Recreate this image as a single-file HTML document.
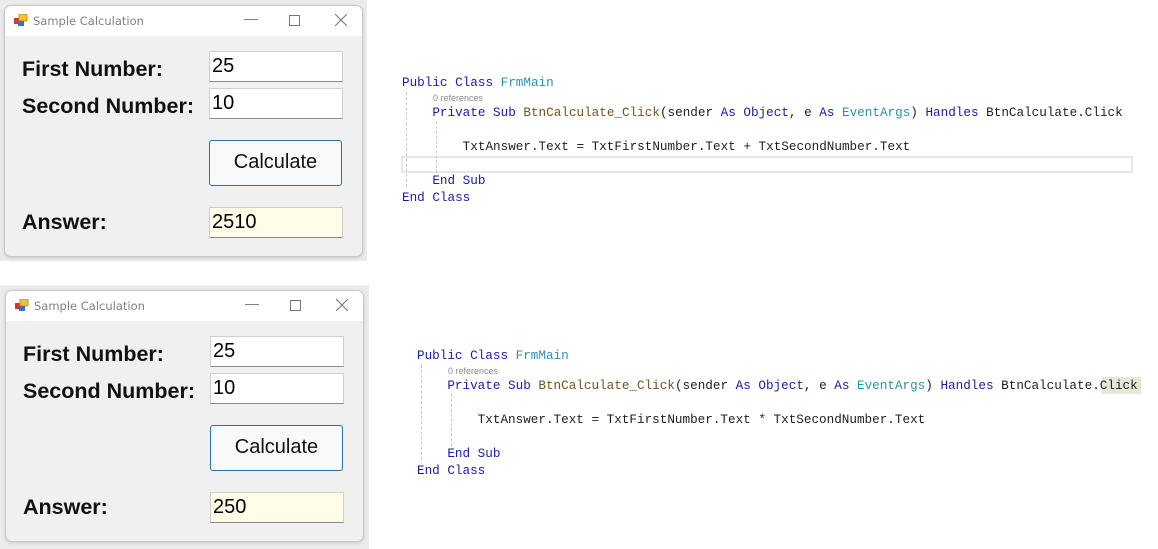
<!DOCTYPE html>
<html><head><meta charset="utf-8"><style>
*{margin:0;padding:0;box-sizing:border-box}
body{width:1158px;height:549px;background:#fff;position:relative;overflow:hidden;font-family:"Liberation Sans",Arial,sans-serif}
.shade{position:absolute;background:#ebebeb}
.win{position:absolute;width:359px;height:252px;background:#f0f0f0;border:1px solid #c8c8c8;border-radius:7px;overflow:hidden;box-shadow:0 1px 3px rgba(0,0,0,.15)}
.tb{position:absolute;left:0;top:0;width:100%;height:30px;background:#fff}
.title{position:absolute;left:28px;top:8px;color:#808080;font-family:"DejaVu Sans","Liberation Sans",sans-serif;font-size:11.5px}
.ico{position:absolute;left:9px;top:8px;width:14px;height:13px}
.ctl{position:absolute;top:6px;color:#777;font-size:14px}
.lbl{position:absolute;left:17px;font-weight:bold;font-size:21.5px;color:#111}
.box{position:absolute;left:204px;width:134px;height:31px;background:#fff;border:1px solid #cfcfcf;border-bottom:1px solid #8a8a8a;font-size:20px;padding:3px 0 0 2px;color:#000}
.btn{position:absolute;left:204px;top:134px;width:133px;height:46px;background:#f8f9fa;border:1px solid #2d6ea3;border-radius:3px;font-size:20px;text-align:center;line-height:43px;color:#111}
.code{position:absolute;font-family:"Liberation Mono",monospace;font-size:12.65px;color:#1e1e1e;white-space:pre;line-height:17px}
.k{color:#1a1ca8}.t{color:#2b91af}.m{color:#74531f}
.ref{position:absolute;font-family:"Liberation Sans",sans-serif;font-size:9px;color:#8a8a8a}
.guide{position:absolute;border-left:1px dashed #c8c8c8;width:0}
</style></head><body>

<div class="shade" style="left:0;top:0;width:367px;height:261px"></div>
<div class="shade" style="left:0;top:285px;width:369px;height:264px"></div>

<div class="win" style="left:4px;top:5px">
 <div class="tb"></div>
 <svg class="ico" viewBox="0 0 14 13"><rect x="0" y="4" width="6" height="6" fill="#d03a2a"/><rect x="5" y="0" width="8" height="7" fill="#f2c230" stroke="#b08a10" stroke-width=".8"/><rect x="4" y="7" width="6" height="5" fill="#3a6fc8"/></svg>
 <div class="title">Sample Calculation</div>
 <div class="ctl" style="left:239px;top:4px">—</div>
 <div style="position:absolute;left:284px;top:9px;width:11px;height:11px;border:1px solid #777"></div>
 <svg style="position:absolute;left:330px;top:8px" width="12" height="12"><path d="M0 0L12 12M12 0L0 12" stroke="#777" stroke-width="1.1"/></svg>
 <div class="lbl" style="top:51px">First Number:</div>
 <div class="lbl" style="top:88px">Second Number:</div>
 <div class="box" style="top:45px">25</div>
 <div class="box" style="top:82px">10</div>
 <div class="btn">Calculate</div>
 <div class="lbl" style="top:204px">Answer:</div>
 <div class="box" style="top:201px;background:#fffde8">2510</div>
</div>

<div class="win" style="left:5px;top:290px">
 <div class="tb"></div>
 <svg class="ico" viewBox="0 0 14 13"><rect x="0" y="4" width="6" height="6" fill="#d03a2a"/><rect x="5" y="0" width="8" height="7" fill="#f2c230" stroke="#b08a10" stroke-width=".8"/><rect x="4" y="7" width="6" height="5" fill="#3a6fc8"/></svg>
 <div class="title">Sample Calculation</div>
 <div class="ctl" style="left:239px;top:4px">—</div>
 <div style="position:absolute;left:284px;top:9px;width:11px;height:11px;border:1px solid #777"></div>
 <svg style="position:absolute;left:330px;top:8px" width="12" height="12"><path d="M0 0L12 12M12 0L0 12" stroke="#777" stroke-width="1.1"/></svg>
 <div class="lbl" style="top:51px">First Number:</div>
 <div class="lbl" style="top:88px">Second Number:</div>
 <div class="box" style="top:45px">25</div>
 <div class="box" style="top:82px">10</div>
 <div class="btn">Calculate</div>
 <div class="lbl" style="top:204px">Answer:</div>
 <div class="box" style="top:201px;background:#fffde8">250</div>
</div>

<!-- code 1 -->
<div style="position:absolute;left:401px;top:156px;width:732px;height:17px;border:2px solid #e6e6e6"></div>
<div class="guide" style="left:406px;top:92px;height:95px"></div>
<div class="guide" style="left:436px;top:121px;height:52px"></div>
<div class="ref" style="left:433px;top:93px">0 references</div>
<div class="code" style="left:402px;top:74px"><span class="k">Public Class</span> <span class="t">FrmMain</span></div>
<div class="code" style="left:402px;top:104px">    <span class="k">Private Sub</span> <span class="m">BtnCalculate_Click</span>(sender <span class="k">As</span> <span class="k">Object</span>, e <span class="k">As</span> <span class="t">EventArgs</span>) <span class="k">Handles</span> BtnCalculate.Click

        TxtAnswer.Text = TxtFirstNumber.Text + TxtSecondNumber.Text

    <span class="k">End Sub</span>
<span class="k">End Class</span></div>

<!-- code 2 -->
<div class="guide" style="left:421px;top:365px;height:95px"></div>
<div class="guide" style="left:451px;top:394px;height:52px"></div>
<div style="position:absolute;left:1102px;top:377px;width:39px;height:17px;background:#e4e8d6"></div>
<div class="ref" style="left:448px;top:366px">0 references</div>
<div class="code" style="left:417px;top:347px"><span class="k">Public Class</span> <span class="t">FrmMain</span></div>
<div class="code" style="left:417px;top:377px">    <span class="k">Private Sub</span> <span class="m">BtnCalculate_Click</span>(sender <span class="k">As</span> <span class="k">Object</span>, e <span class="k">As</span> <span class="t">EventArgs</span>) <span class="k">Handles</span> BtnCalculate.Click

        TxtAnswer.Text = TxtFirstNumber.Text * TxtSecondNumber.Text

    <span class="k">End Sub</span>
<span class="k">End Class</span></div>

</body></html>
